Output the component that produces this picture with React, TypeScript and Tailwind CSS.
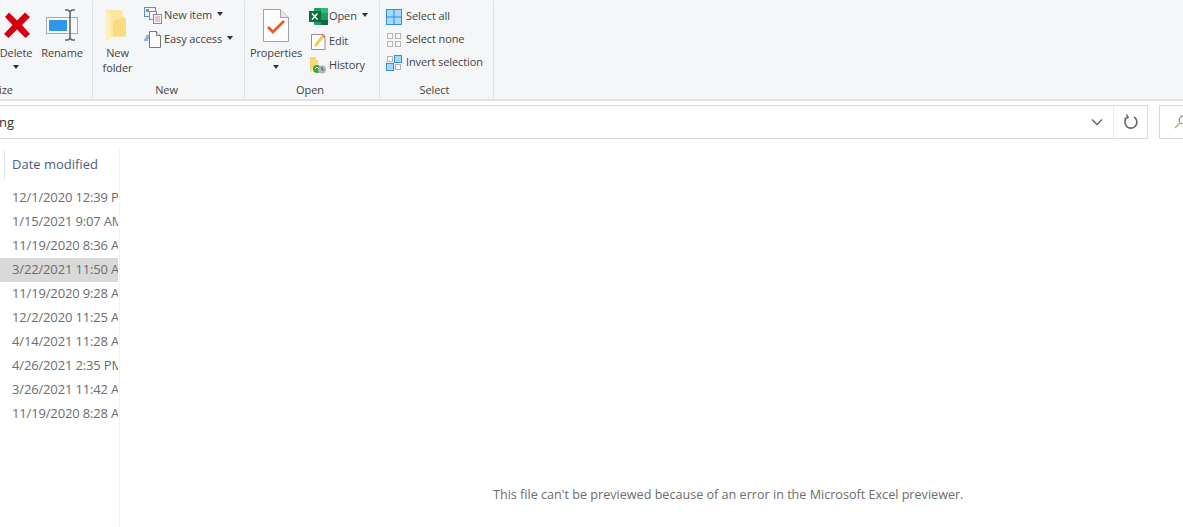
import type { ReactNode } from 'react';

const DATES = [
  '12/1/2020 12:39 PM',
  '1/15/2021 9:07 AM',
  '11/19/2020 8:36 AM',
  '3/22/2021 11:50 AM',
  '11/19/2020 9:28 AM',
  '12/2/2020 11:25 AM',
  '4/14/2021 11:28 AM',
  '4/26/2021 2:35 PM',
  '3/26/2021 11:42 AM',
  '11/19/2020 8:28 AM',
];

const Caret = () => <span className="inline-block w-0 h-0 border-x-[3.5px] border-x-transparent border-t-[4px] border-t-[#333]" />;

function DeleteIcon() {
  return (
    <svg width="30" height="30" viewBox="0 0 30 30" className="ml-[2px]">
      <path d="M3 7 L7 2.5 L15 10.5 L23 2.5 L28 7 L20 15 L28 24 L23.5 28 L15 19.5 L6.5 28 L2 24 L10.5 15 Z" fill="#d7000f" />
    </svg>
  );
}

function RenameIcon() {
  return (
    <svg width="34" height="32" viewBox="0 0 34 32" className="ml-[2px]">
      <rect x="0.5" y="8.5" width="31" height="16" fill="#f8f9fa" stroke="#a5a9ad" />
      <rect x="3" y="11" width="18" height="11" fill="#2f97ea" />
      <path d="M19 1h3l2 1.500 2-1.500h3M24 2.500v27M19 31h3l2-1.500 2 1.500h3" fill="none" stroke="#676767" strokeWidth="1.600" />
    </svg>
  );
}

function FolderIcon() {
  return (
    <svg width="24" height="32" viewBox="0 0 24 32">
      <path d="M0 1h16v7h4v20H5l-5 3z" fill="#fbe79e" />
      <path d="M7 27V12l9-3V1l1 8 3 2v16z" fill="#f9dc82" />
      <path d="M0 1l5 4v26l-5-3z" fill="#fff0b8" />
    </svg>
  );
}

function NewItemIcon() {
  return (
    <svg width="18" height="17" viewBox="0 0 18 17">
      <rect x="0.500" y="0.500" width="11" height="9" fill="#eef3f7" stroke="#5d93c0" />
      <rect x="2" y="2" width="3" height="3" fill="#62a879" />
      <rect x="5.500" y="4.500" width="7" height="8" fill="#f4f4f4" stroke="#8a8a8a" />
      <rect x="9.500" y="7.500" width="8" height="9" fill="#f8f8ff" stroke="#8a8a8a" />
      <path d="M11 10h5M11 12h5M11 14h5" stroke="#d68da5" />
    </svg>
  );
}

function EasyAccessIcon() {
  return (
    <svg width="18" height="18" viewBox="0 0 18 18">
      <path d="M5.500 1.500h7l4 4v12h-11z" fill="#fcfcfc" stroke="#777" />
      <path d="M12.500 1.500v4h4" fill="#eee" stroke="#777" />
      <path d="M2 6h3M1 8h4M0 10h4" stroke="#2a76c4" strokeWidth="1.200" />
    </svg>
  );
}

function PropertiesIcon() {
  return (
    <svg width="26" height="33" viewBox="0 0 26 33">
      <path d="M0.500 0.500h17l8 8v24h-25z" fill="#fdfdfd" stroke="#a3a3a3" />
      <path d="M17.500 0.500v8h8" fill="#e9e9e9" stroke="#a3a3a3" />
      <path d="M5 18l5 5 11-11" fill="none" stroke="#ec5a24" strokeWidth="2.800" />
    </svg>
  );
}

function ExcelIcon() {
  return (
    <svg width="19" height="17" viewBox="0 0 19 17">
      <rect x="5" y="0" width="14" height="17" rx="1" fill="#1f9d5f" />
      <rect x="12" y="0" width="7" height="5" fill="#33b878" />
      <rect x="12" y="12" width="7" height="5" fill="#0f6b3e" />
      <rect x="0" y="3" width="12" height="11" fill="#0e6f3c" />
      <path d="M3 5.500l5.500 6M8.500 5.500l-5.500 6" stroke="#fff" strokeWidth="1.500" />
    </svg>
  );
}

function EditIcon() {
  return (
    <svg width="15" height="17" viewBox="0 0 15 17">
      <path d="M0.500 1.500h10l3.500 3.500v11.500H0.500z" fill="#fdfdfd" stroke="#8f8f8f" />
      <path d="M3 14l1-3 7-9 2 2-7 9z" fill="#f3c94a" />
      <path d="M11 1l3 3" stroke="#d96c5f" strokeWidth="1.500" />
    </svg>
  );
}

function HistoryIcon() {
  return (
    <svg width="16" height="17" viewBox="0 0 16 17">
      <path d="M0 0h6v3h2v9H3l-3 4z" fill="#f8d873" />
      <circle cx="7" cy="12" r="4" fill="#3fa33f" />
      <circle cx="12" cy="12.500" r="4" fill="#b3b6b8" />
      <path d="M12 10v3h2" stroke="#555" fill="none" />
      <path d="M5 12l2-2 2 2" stroke="#fff" fill="none" />
    </svg>
  );
}

function SelectAllIcon() {
  return (
    <svg width="16" height="16" viewBox="0 0 16 16">
      <rect x="0.500" y="0.500" width="15" height="15" fill="#a6d8fa" stroke="#2f8fdb" />
      <path d="M8 1v14M1 8h14" stroke="#2f8fdb" />
    </svg>
  );
}

function SelectCells({ on }: { on: boolean }) {
  const cells: [number, number, boolean][] = [
    [1, 1, false],
    [9, 1, on],
    [1, 9, on],
    [9, 9, false],
  ];
  return (
    <svg width="16" height="16" viewBox="0 0 16 16">
      {cells.map(([x, y, blue]) => (
        <rect
          key={`${x}-${y}`}
          x={blue ? x - 1 + 0.5 : x + 0.5}
          y={blue ? y - 1 + 0.5 : y + 0.5}
          width={blue ? 7 : 5}
          height={blue ? 7 : 5}
          fill={blue ? '#a6d8fa' : '#f7f7f7'}
          stroke={blue ? '#2f8fdb' : '#b5b5b5'}
        />
      ))}
    </svg>
  );
}

function BigButton({ icon, label, width, caret }: { icon: ReactNode; label: ReactNode; width: string; caret?: boolean }) {
  return (
    <div className={`flex flex-col items-center shrink-0 ${width}`}>
      <div className="h-[38px] mt-[5px] flex items-center justify-center">{icon}</div>
      <div className="text-center leading-[15px] pt-[1px]">{label}</div>
      {caret && <div className="mt-[5px] flex"><Caret /></div>}
    </div>
  );
}

function SmallRow({ icon, label, iconBox, caret, height }: { icon: ReactNode; label: string; iconBox: string; caret?: boolean; height: string }) {
  return (
    <div className={`flex items-center whitespace-nowrap ${height}`}>
      <div className={`flex justify-center ${iconBox}`}>{icon}</div>
      <span>{label}</span>
      {caret && <span className="ml-[5px] mb-[3px] flex"><Caret /></span>}
    </div>
  );
}

function Group({ label, width, children, clipped }: { label: string; width: string; children: ReactNode; clipped?: boolean }) {
  return (
    <div className={`shrink-0 h-[97px] mt-[1px] flex flex-col border-r border-[#e2e3e4] overflow-hidden ${width}`}>
      <div className={`flex h-[81px] ${clipped ? 'justify-end' : ''}`}>{children}</div>
      <div className={`leading-[16px] whitespace-nowrap pt-[1px] ${clipped ? '-ml-[1px]' : 'text-center pr-[4px]'}`}>{label}</div>
    </div>
  );
}

export default function App() {
  return (
    <div className="w-[1183px] h-[527px] overflow-hidden bg-white flex flex-col text-[#444] font-['Open_Sans',sans-serif]">
      {/* Ribbon */}
      <div className="h-[101px] shrink-0 flex bg-[#f5f6f7] border-b-2 border-[#e1e2e3] text-[11px] tracking-[-0.1px]">
        <Group label="ize" width="w-[93px]" clipped>
          <BigButton icon={<DeleteIcon />} label="Delete" width="w-[34px] mr-[6px]" caret />
          <BigButton icon={<RenameIcon />} label="Rename" width="w-[46px] mr-[7px]" />
        </Group>
        <Group label="New" width="w-[152px]">
          <BigButton icon={<FolderIcon />} label={<>New<br />folder</>} width="w-[49px]" />
          <div className="pt-[2px]">
            <SmallRow icon={<NewItemIcon />} label="New item" iconBox="w-[22px]" height="h-[24px]" caret />
            <SmallRow icon={<EasyAccessIcon />} label="Easy access" iconBox="w-[22px]" height="h-[24px]" caret />
          </div>
        </Group>
        <Group label="Open" width="w-[135px]">
          <BigButton icon={<PropertiesIcon />} label="Properties" width="w-[62px]" caret />
          <div className="pt-[3px]">
            <SmallRow icon={<ExcelIcon />} label="Open" iconBox="w-[22px]" height="h-[25px]" caret />
            <SmallRow icon={<EditIcon />} label="Edit" iconBox="w-[22px]" height="h-[24px]" />
            <SmallRow icon={<HistoryIcon />} label="History" iconBox="w-[22px]" height="h-[24px]" />
          </div>
        </Group>
        <Group label="Select" width="w-[114px]">
          <div className="pt-[4px] pl-[6px]">
            <SmallRow icon={<SelectAllIcon />} label="Select all" iconBox="w-[20px] justify-start" height="h-[23px]" />
            <SmallRow icon={<SelectCells on={false} />} label="Select none" iconBox="w-[20px] justify-start" height="h-[23px]" />
            <SmallRow icon={<SelectCells on />} label="Invert selection" iconBox="w-[20px] justify-start" height="h-[23px]" />
          </div>
        </Group>
      </div>

      {/* Address bar */}
      <div className="flex h-[34px] mt-[4px] shrink-0 text-[#7a7a7a]">
        <div className="w-[1113px] shrink-0 flex items-center justify-between border-y border-[#d9d9d9] pr-[10px]">
          <span className="text-[13px] text-[#333] -ml-[1px] pt-[2px]">ng</span>
          <svg width="12" height="8" viewBox="0 0 12 8"><path d="M1 1.500l5 5 5-5" fill="none" stroke="#666" strokeWidth="1.500" /></svg>
        </div>
        <div className="w-[35px] shrink-0 flex items-center justify-center border border-[#d9d9d9] border-l-[#ececec]">
          <svg width="16" height="16" viewBox="0 0 16 16"><path d="M4.500 3.200A6 6 0 1 0 11 3M3.500 0.500l1.500 3-3.500 1" fill="none" stroke="#666" strokeWidth="1.600" /></svg>
        </div>
        <div className="w-[40px] shrink-0 ml-[11px] flex items-center pl-[14px] border border-[#d9d9d9]">
          <svg className="shrink-0" width="14" height="14" viewBox="0 0 14 14"><circle cx="9" cy="5" r="3.800" fill="none" stroke="#888" strokeWidth="1.200" /><path d="M6 8l-5 5" stroke="#c9a46a" strokeWidth="1.500" /></svg>
        </div>
      </div>

      {/* File list and preview */}
      <div className="flex-1 flex min-h-0">
        <div className="w-[120px] shrink-0 border-r border-[#f2f2f2] mt-[8px] text-[13px] text-[#6d6d6d]">
          <div className="h-[30px] mt-[3px] ml-[4px] border-l border-[#e5e5e5] pl-[7px] flex items-center text-[#4c607a]">Date modified</div>
          <div className="mt-[6px] w-[118px]">
            {DATES.map((date, i) => (
              <div key={date} className={`h-[24px] pl-[12px] flex items-center whitespace-nowrap overflow-hidden tracking-[-0.15px] ${i === 3 ? 'bg-[#d9d9d9]' : ''}`}>
                {date}
              </div>
            ))}
          </div>
        </div>
        <div className="flex-1 flex items-end pl-[373px] pb-[24px] text-[12.6px] leading-[17px] text-[#6d6d6d] whitespace-nowrap">
          This file can't be previewed because of an error in the Microsoft Excel previewer.
        </div>
      </div>
    </div>
  );
}
